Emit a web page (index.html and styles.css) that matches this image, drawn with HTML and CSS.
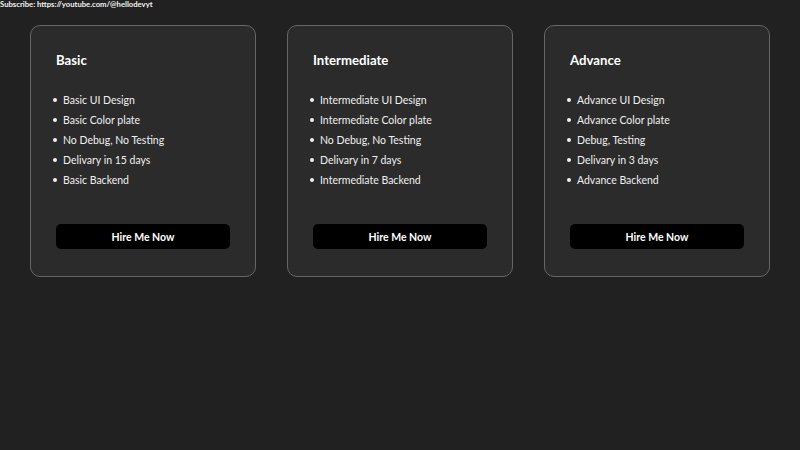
FILE: index.html
```html
<!DOCTYPE html>
<html>
<head>
<meta charset="utf-8">
<link rel="stylesheet" href="styles.css">
</head>
<body>
<div class="sub">Subscribe: https://youtube.com/@hellodevyt</div>
<div class="cards">
  <div class="card">
    <h2 class="title">Basic</h2>
    <ul class="list">
      <li>Basic UI Design</li>
      <li>Basic Color plate</li>
      <li>No Debug, No Testing</li>
      <li>Delivary in 15 days</li>
      <li>Basic Backend</li>
    </ul>
    <button class="btn">Hire Me Now</button>
  </div>
  <div class="card">
    <h2 class="title">Intermediate</h2>
    <ul class="list">
      <li>Intermediate UI Design</li>
      <li>Intermediate Color plate</li>
      <li>No Debug, No Testing</li>
      <li>Delivary in 7 days</li>
      <li>Intermediate Backend</li>
    </ul>
    <button class="btn">Hire Me Now</button>
  </div>
  <div class="card">
    <h2 class="title">Advance</h2>
    <ul class="list">
      <li>Advance UI Design</li>
      <li>Advance Color plate</li>
      <li>Debug, Testing</li>
      <li>Delivary in 3 days</li>
      <li>Advance Backend</li>
    </ul>
    <button class="btn">Hire Me Now</button>
  </div>
</div>
</body>
</html>
```
FILE: styles.css
```css
html, body {
  margin: 0;
  padding: 0;
  background: #212121;
  color: #ffffff;
  font-family: "Lato", "Open Sans", sans-serif;
}
.sub {
  font-size: 7.7px;
  font-weight: 700;
  line-height: 9px;
  color: #f2f2f2;
}
.cards {
  display: flex;
  gap: 31px;
  padding: 16px 30px 0;
}
.card {
  box-sizing: border-box;
  width: 226px;
  height: 252px;
  background: #2b2b2b;
  border: 1px solid #666666;
  border-radius: 10px;
  padding: 25px 25px 0;
  display: flex;
  flex-direction: column;
}
.title {
  margin: 0;
  font-size: 13.2px;
  font-weight: 700;
  line-height: 18px;
  color: #ffffff;
}
.list {
  margin: 21px 0 0;
  padding: 0 0 0 7px;
  list-style: none;
}
.list li {
  position: relative;
  font-size: 10.5px;
  line-height: 20px;
  color: #f0f0f0;
}
.list li::before {
  content: "";
  position: absolute;
  left: -10px;
  top: 8px;
  width: 4px;
  height: 4px;
  border-radius: 50%;
  background: #f0f0f0;
}
.btn {
  margin-top: 34px;
  width: 174px;
  height: 25px;
  background: #000000;
  color: #ffffff;
  border: none;
  border-radius: 5px;
  font-family: "Lato", "Open Sans", sans-serif;
  font-size: 10.5px;
  font-weight: 700;
  padding: 0;
}
```
